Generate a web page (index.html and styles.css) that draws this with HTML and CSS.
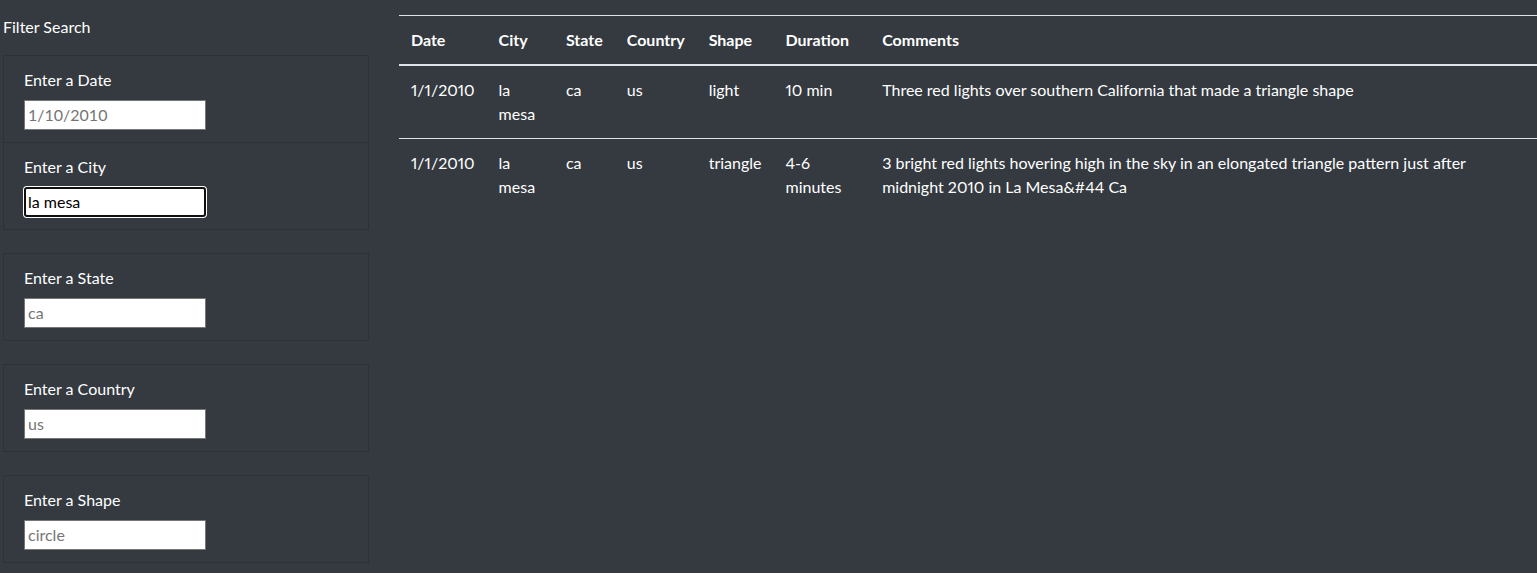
FILE: index.html
```html
<!DOCTYPE html>
<html lang="en">
  <head>
    <meta charset="UTF-8" />
    <meta name="viewport" content="width=device-width, initial-scale=1.0" />
    <title>UFO Sightings</title>
    <link rel="stylesheet" href="styles.css">
  </head>
  <body>
    <div class="page">
      <aside class="filters">
        <p class="filters-title">Filter Search</p>
        <ul class="filter-list">
          <li class="filter">
            <label for="datetime">Enter a Date</label>
            <input type="text" id="datetime" placeholder="1/10/2010" />
          </li>
          <li class="filter">
            <label for="city">Enter a City</label>
            <input type="text" id="city" class="focused" value="la mesa" />
          </li>
        </ul>
        <ul class="filter-list">
          <li class="filter">
            <label for="state">Enter a State</label>
            <input type="text" id="state" placeholder="ca" />
          </li>
        </ul>
        <ul class="filter-list">
          <li class="filter">
            <label for="country">Enter a Country</label>
            <input type="text" id="country" placeholder="us" />
          </li>
        </ul>
        <ul class="filter-list">
          <li class="filter">
            <label for="shape">Enter a Shape</label>
            <input type="text" id="shape" placeholder="circle" />
          </li>
        </ul>
      </aside>

      <main class="results">
        <table class="ufo-table">
          <thead>
            <tr>
              <th>Date</th>
              <th>City</th>
              <th>State</th>
              <th>Country</th>
              <th>Shape</th>
              <th>Duration</th>
              <th class="comments">Comments</th>
            </tr>
          </thead>
          <tbody>
            <tr>
              <td>1/1/2010</td>
              <td>la mesa</td>
              <td>ca</td>
              <td>us</td>
              <td>light</td>
              <td>10 min</td>
              <td>Three red lights over southern California that made a triangle shape</td>
            </tr>
            <tr>
              <td>1/1/2010</td>
              <td>la mesa</td>
              <td>ca</td>
              <td>us</td>
              <td>triangle</td>
              <td>4-6 minutes</td>
              <td>3 bright red lights hovering high in the sky in an elongated triangle pattern just after midnight 2010 in La Mesa&amp;#44 Ca</td>
            </tr>
          </tbody>
        </table>
      </main>
    </div>
  </body>
</html>
```

FILE: styles.css
```css
body {
  margin: 0;
  background-color: #343a40;
  color: #fff;
  font-family: "Segoe UI", Lato, "Noto Sans", sans-serif;
  font-size: 16px;
  line-height: 1.5;
  font-variant-numeric: proportional-nums;
}
.page {
  display: flex;
  align-items: flex-start;
}

/* Sidebar filters */
.filters {
  width: 366px;
  padding: 15px 0 0 3px;
  flex-shrink: 0;
}
.filters-title {
  margin: 0 0 16px;
}
.filter-list {
  list-style-type: none;
  margin: 0 0 23px;
  padding: 0;
}
.filter {
  display: flex;
  flex-direction: column;
  align-items: flex-start;
  padding: 12px 20px;
  border: 1px solid rgba(0, 0, 0, 0.125);
}
.filter + .filter {
  border-top: none;
}
.filter label {
  margin-bottom: 8px;
}
.filter input {
  box-sizing: border-box;
  width: 182px;
  height: 30px;
  padding: 0 3px 1px;
  border: 1px solid #767676;
  border-radius: 0;
  background: #fff;
  color: #000;
  font-family: inherit;
  font-size: 16px;
}
.filter input::placeholder {
  color: #757575;
}
.filter input.focused {
  border: 2px solid #101010;
  border-radius: 3px;
  padding-left: 2px;
  box-shadow: 0 0 0 1px #fff;
  outline: none;
}

/* Results table */
.results {
  flex: 1;
  margin-left: 30px;
  padding-top: 15px;
}
.ufo-table {
  width: 100%;
  border-collapse: collapse;
  color: #fff;
}
.ufo-table th,
.ufo-table td {
  padding: 12px;
  text-align: left;
  vertical-align: top;
  border-top: 1px solid #dee2e6;
}
.ufo-table th {
  font-weight: bold;
  border-bottom: 2px solid #dee2e6;
}
.ufo-table th.comments {
  width: 58.6%;
}
.ufo-table tbody tr:first-child td {
  border-top: none;
}
```
